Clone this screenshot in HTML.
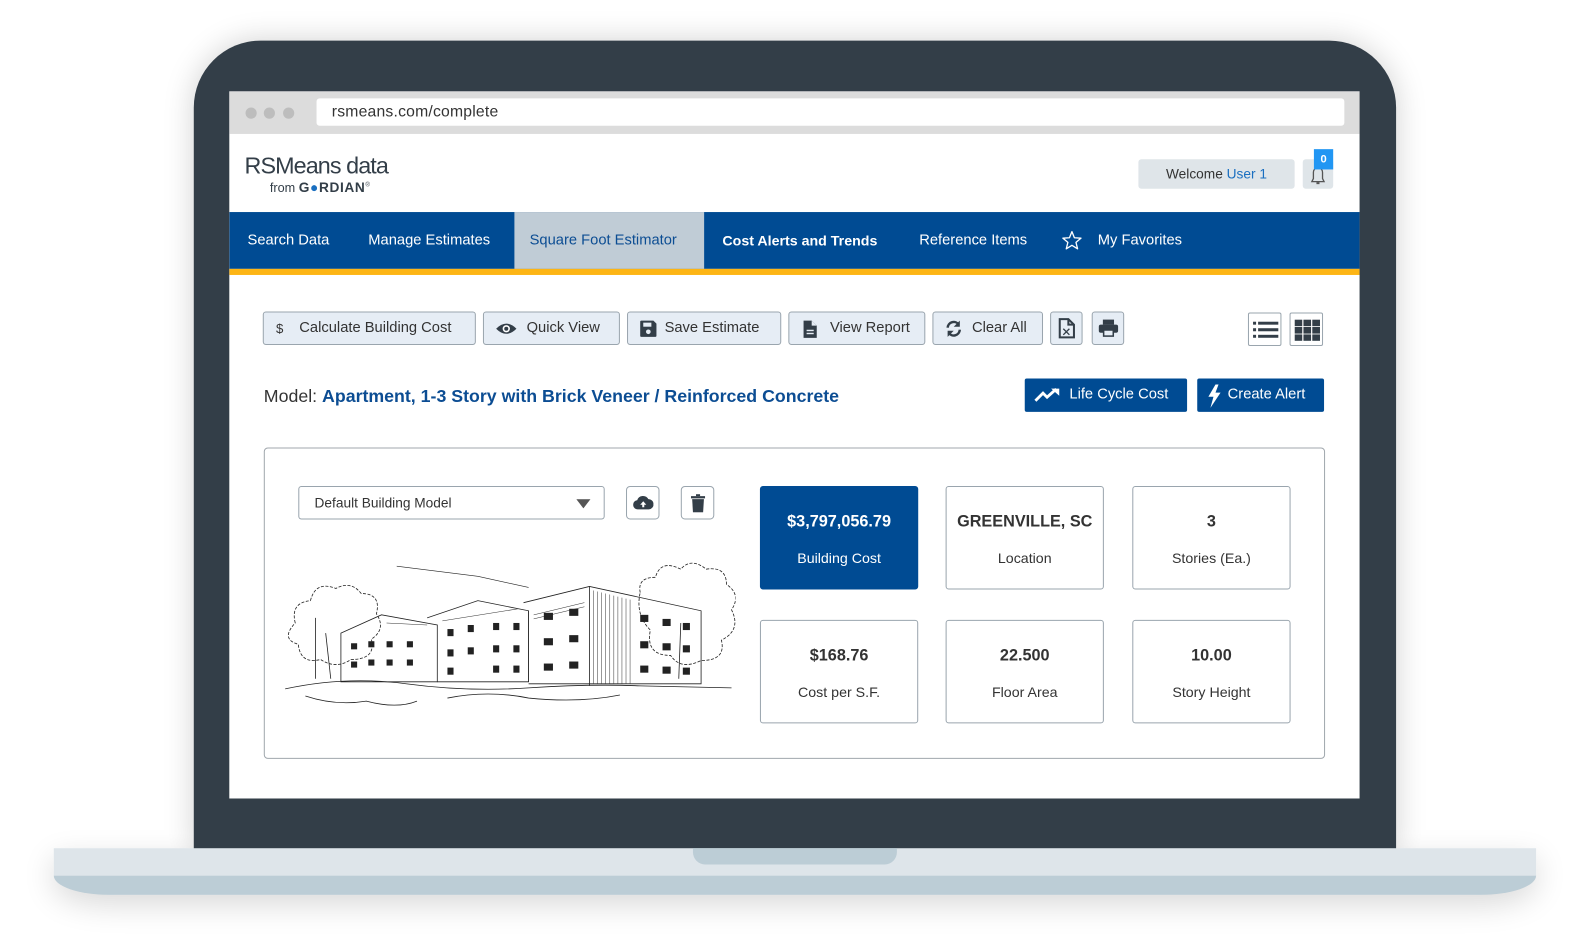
<!DOCTYPE html>
<html><head><meta charset="utf-8">
<style>
*{box-sizing:border-box;margin:0;padding:0}
html,body{width:1590px;height:934px;overflow:hidden;background:#fff;font-family:"Liberation Sans",Arial,sans-serif}
#w{position:absolute;left:0;top:0;width:1567px;height:921px;transform:scale(1.0146);transform-origin:0 0}
.a{position:absolute}
.lid{left:191px;top:40px;width:1185px;height:800px;background:#333e48;border-radius:66px 66px 0 0;box-shadow:0 0 30px rgba(0,0,0,.18)}
.screen{left:226px;top:90px;width:1114px;height:697px;background:#fff;overflow:hidden}
.bar{left:0;top:0;width:1114px;height:42px;background:#dcdcdc}
.dot{width:11px;height:11px;border-radius:50%;background:#bdbdbd;top:16px}
.url{left:86px;top:7px;width:1013px;height:27px;background:#fff;border-radius:3px;font-size:15.5px;color:#333;line-height:27px;padding-left:15px;letter-spacing:.2px}
.nav{left:0;top:119px;width:1114px;height:56px;background:#004b93;color:#fff;font-size:14.5px}
.nav span{position:absolute;top:0;line-height:56px}
.yb{left:0;top:175px;width:1114px;height:6px;background:#fdb515}
.btn{position:absolute;top:217px;height:33px;background:#e6edf5;border:1px solid #9aa5ae;border-radius:3px;font-size:14.5px;color:#333;line-height:31px;white-space:nowrap}
.btn svg{position:absolute;top:7px}
.tg{position:absolute;top:218px;width:33px;height:33px;background:#fff;border:1px solid #9aa5ae;border-radius:2px}
.bb{position:absolute;top:283px;height:33px;background:#004b93;border-radius:2px;color:#fff;font-size:14.5px;line-height:33px}
.panel{left:34px;top:351px;width:1046px;height:307px;border:1px solid #a0a7ad;border-radius:4px}
.card{position:absolute;width:156px;height:102px;border:1px solid #9aa5ae;border-radius:3px;text-align:center;color:#333}
.card b{position:absolute;left:0;right:0;top:26px;font-size:16px}
.card i{position:absolute;left:0;right:0;top:62px;font-size:14px;font-style:normal}
.ib{position:absolute;top:37px;width:33px;height:33px;border:1px solid #9aa5ae;border-radius:4px;background:#fff}
</style></head><body><div id="w">
<div class="a" style="left:53px;top:836px;width:1461px;height:46px;border-radius:0 0 60px 60px/0 0 20px 20px;box-shadow:0 10px 30px rgba(0,0,0,.15)"></div>
<div class="a lid"></div>
<div class="a screen">
 <div class="a bar">
  <div class="a dot" style="left:16px"></div><div class="a dot" style="left:34px"></div><div class="a dot" style="left:53px"></div>
  <div class="a url">rsmeans.com/complete</div>
 </div>
 <div class="a" style="left:15px;top:59px;font-size:23px;color:#333e48;letter-spacing:-.9px;line-height:28px">RSMeans data</div>
 <div class="a" style="left:40px;top:86px;font-size:12.5px;color:#333e48;line-height:15px">from <b style="font-size:13.5px;letter-spacing:.6px">G<span style="color:#1a6fc0">●</span>RDIAN</b><sup style="font-size:6px">®</sup></div>
 <div class="a" style="left:896px;top:67px;width:154px;height:29px;background:#dfe5e9;border-radius:3px;font-size:13.5px;line-height:29px;text-align:center;color:#333">Welcome <span style="color:#1a6fc0">User 1</span></div>
 <div class="a" style="left:1058px;top:67px;width:30px;height:29px;background:#dfe5e9;border-radius:3px">
  <svg width="30" height="29" viewBox="0 0 30 29"><path d="M9 22 L21 22 L19.5 19 L19.5 13 A4.5 5 0 0 0 10.5 13 L10.5 19 Z" fill="none" stroke="#555" stroke-width="1.3"/><rect x="13.5" y="22.5" width="3" height="2" fill="#555"/></svg>
 </div>
 <div class="a" style="left:1069px;top:57px;width:19px;height:20px;background:#2196f3;color:#fff;font-size:11px;font-weight:bold;text-align:center;line-height:20px">0</div>
 <div class="a nav">
  <span style="left:18px">Search Data</span>
  <span style="left:137px">Manage Estimates</span>
  <span style="left:281px;width:187px;height:56px;background:#c0ccd6;color:#0c4d93;padding-left:15px">Square Foot Estimator</span>
  <span style="left:486px;font-weight:bold;font-size:14px">Cost Alerts and Trends</span>
  <span style="left:680px">Reference Items</span>
  <svg style="position:absolute;left:820px;top:18px" width="21" height="20" viewBox="0 0 24 23"><path d="M12 1.5 L14.8 8.4 L22.3 8.9 L16.6 13.7 L18.4 21 L12 17 L5.6 21 L7.4 13.7 L1.7 8.9 L9.2 8.4 Z" fill="none" stroke="#fff" stroke-width="1.5" stroke-linejoin="round"/></svg>
  <span style="left:856px">My Favorites</span>
 </div>
 <div class="a yb"></div>

 <div class="btn" style="left:33px;width:210px;padding-left:35px"><span style="position:absolute;left:12px;font-size:13px">$</span>Calculate Building Cost</div>
 <div class="btn" style="left:250px;width:135px;padding-left:42px"><svg style="left:11px;top:9px" width="22" height="14" viewBox="0 0 22 14"><path d="M1 7 Q11 -3 21 7 Q11 17 1 7Z" fill="#333e48"/><circle cx="11" cy="7" r="3.6" fill="#fff"/><circle cx="11" cy="7" r="2" fill="#333e48"/></svg>Quick View</div>
 <div class="btn" style="left:392px;width:152px;padding-left:36px"><svg style="left:11px" width="18" height="18" viewBox="0 0 18 18"><path d="M1 2 Q1 1 2 1 L14 1 L17 4 L17 16 Q17 17 16 17 L2 17 Q1 17 1 16Z" fill="#333e48"/><rect x="4" y="3" width="8" height="4" fill="#e6edf5"/><circle cx="9" cy="12" r="2.3" fill="#e6edf5"/></svg>Save Estimate</div>
 <div class="btn" style="left:551px;width:135px;padding-left:40px"><svg style="left:13px" width="15" height="19" viewBox="0 0 15 19"><path d="M1 1 L9 1 L14 6 L14 18 L1 18Z" fill="#333e48"/><path d="M9 1 L9 6 L14 6" fill="#e6edf5"/><rect x="4" y="10" width="7" height="1.4" fill="#e6edf5"/><rect x="4" y="13" width="7" height="1.4" fill="#e6edf5"/></svg>View Report</div>
 <div class="btn" style="left:693px;width:109px;padding-left:38px"><svg style="left:11px" width="18" height="18" viewBox="0 0 18 18"><path d="M3 8 A6 6 0 0 1 14 5" fill="none" stroke="#333e48" stroke-width="2.4"/><path d="M15 1 L15 7 L9 7Z" fill="#333e48"/><path d="M15 10 A6 6 0 0 1 4 13" fill="none" stroke="#333e48" stroke-width="2.4"/><path d="M3 17 L3 11 L9 11Z" fill="#333e48"/></svg>Clear All</div>
 <div class="btn" style="left:809px;width:32px"><svg style="left:7px;top:5px" width="17" height="21" viewBox="0 0 17 21"><path d="M1.5 1.5 L10 1.5 L15.5 7 L15.5 19.5 L1.5 19.5Z" fill="none" stroke="#333e48" stroke-width="2"/><path d="M10 1.5 L10 7 L15.5 7" fill="none" stroke="#333e48" stroke-width="2"/><path d="M5 11 L11 17 M11 11 L5 17" stroke="#333e48" stroke-width="1.3"/></svg></div>
 <div class="btn" style="left:850px;width:32px"><svg style="left:5px;top:6px" width="21" height="19" viewBox="0 0 21 19"><rect x="5" y="1" width="11" height="5" fill="#333e48"/><rect x="1" y="6" width="19" height="8" rx="2" fill="#333e48"/><rect x="5" y="11" width="11" height="7" fill="#333e48"/><rect x="6.5" y="12" width="8" height="4.5" fill="#e6edf5"/></svg></div>
 <div class="tg" style="left:1004px"><svg style="position:absolute;left:4px;top:8px" width="25" height="16" viewBox="0 0 25 16"><g fill="#333e48"><rect x="0" y="0" width="3" height="3"/><rect x="5" y="0" width="20" height="3"/><rect x="0" y="6.5" width="3" height="3"/><rect x="5" y="6.5" width="20" height="3"/><rect x="0" y="13" width="3" height="3"/><rect x="5" y="13" width="20" height="3"/></g></svg></div>
 <div class="tg" style="left:1045px"><svg style="position:absolute;left:4px;top:6px" width="25" height="21" viewBox="0 0 25 21"><g fill="#333e48"><rect x="0" y="0" width="7.5" height="6.5"/><rect x="8.7" y="0" width="7.5" height="6.5"/><rect x="17.4" y="0" width="7.6" height="6.5"/><rect x="0" y="7.3" width="7.5" height="6.5"/><rect x="8.7" y="7.3" width="7.5" height="6.5"/><rect x="17.4" y="7.3" width="7.6" height="6.5"/><rect x="0" y="14.6" width="7.5" height="6.4"/><rect x="8.7" y="14.6" width="7.5" height="6.4"/><rect x="17.4" y="14.6" width="7.6" height="6.4"/></g></svg></div>

 <div class="a" style="left:34px;top:289px;font-size:17.5px;color:#333;line-height:22px">Model: <b style="color:#0c4d93">Apartment, 1-3 Story with Brick Veneer / Reinforced Concrete</b></div>
 <div class="bb" style="left:784px;width:160px;padding-left:44px"><svg style="position:absolute;left:9px;top:9px" width="27" height="15" viewBox="0 0 27 15"><path d="M1.5 13 L9 5.5 L13 9.5 L22 1.5" fill="none" stroke="#fff" stroke-width="2.8"/><path d="M17 1 L25 1 L25 8Z" fill="#fff"/></svg>Life Cycle Cost</div>
 <div class="bb" style="left:954px;width:125px;padding-left:30px"><svg style="position:absolute;left:10px;top:6px" width="14" height="23" viewBox="0 0 14 23"><path d="M8 0 L1 12 L6 12 L3 23 L13 8 L8 8 L11 0Z" fill="#fff"/></svg>Create Alert</div>

 <div class="a panel">
  <div class="a" style="left:33px;top:37px;width:302px;height:33px;border:1px solid #9aa5ae;border-radius:3px;font-size:13.5px;color:#333;line-height:31px;padding-left:15px">Default Building Model<svg style="position:absolute;right:13px;top:12px" width="14" height="9" viewBox="0 0 14 9"><path d="M0 0 L14 0 L7 9Z" fill="#555"/></svg></div>
  <div class="ib" style="left:356px"><svg style="position:absolute;left:6px;top:8px" width="20" height="15" viewBox="0 0 20 15"><path d="M5 14 A4.5 4.5 0 0 1 4 5 A6 6 0 0 1 15 4 A5 5 0 0 1 15.5 14Z" fill="#333e48"/><path d="M10 6 L13 9.5 L11 9.5 L11 12 L9 12 L9 9.5 L7 9.5Z" fill="#fff"/></svg></div>
  <div class="ib" style="left:410px"><svg style="position:absolute;left:9px;top:7px" width="14" height="18" viewBox="0 0 14 18"><rect x="0" y="2" width="14" height="2.2" fill="#333e48"/><rect x="5" y="0" width="4" height="2" fill="#333e48"/><path d="M1.2 5 L12.8 5 L12 18 L2 18Z" fill="#333e48"/></svg></div>
  <svg class="a" style="left:20px;top:112px" width="444" height="150" viewBox="0 0 444 150">
   <g fill="none" stroke="#222" stroke-width=".8">
    <path d="M110 4 L190 14 L240 25" stroke-width=".6"/>
    <path d="M10 60 q-5 -20 15 -22 q5 -20 25 -12 q15 -8 25 5 q20 0 15 20 q10 15 -5 25 q5 20 -20 20 q-15 10 -30 0 q-20 5 -22 -15 q-18 -5 -3 -21z" stroke-dasharray="3 1.5"/>
    <path d="M350 30 q-3 -15 15 -15 q5 -18 25 -8 q10 -12 25 0 q20 -3 20 15 q15 10 5 25 q10 20 -10 30 q5 20 -20 20 q-20 10 -30 -5 q-25 0 -20 -25 q-15 -15 -10 -37z" stroke-dasharray="3 1.5"/>
    <path d="M30 55 l0 60 M40 70 l5 45 M390 60 l-2 55"/>
    <path d="M55 70 L95 52 L150 62 L150 118 L55 118 Z"/>
    <path d="M140 55 L190 38 L240 48 L240 118 L150 118"/>
    <path d="M235 40 L300 24 L410 48 L410 120 L240 120"/>
    <path d="M300 24 L300 122 M240 48 L240 118"/>
    <path d="M0 125 Q60 112 120 120 T240 124 T350 122 L440 124"/>
    <path d="M20 132 q30 10 60 5 q30 8 50 0 M160 134 q40 -8 80 0 q50 5 90 -3"/>
   </g>
   <g fill="none" stroke="#333" stroke-width=".5">
    <path d="M304 28 L304 120 M308 29 L308 120 M312 30 L312 120 M316 31 L316 120 M320 32 L320 120 M324 33 L324 120 M328 34 L328 120 M332 35 L332 120 M336 36 L336 120 M340 37 L340 120"/>
    <path d="M245 52 L295 40 M245 56 L295 44 M155 58 L230 46 M100 60 L140 62"/>
   </g>
   <g fill="#222">
    <rect x="65" y="80" width="6" height="6"/><rect x="82" y="78" width="6" height="6"/><rect x="100" y="78" width="6" height="6"/><rect x="120" y="78" width="6" height="6"/>
    <rect x="65" y="98" width="6" height="6"/><rect x="82" y="96" width="6" height="6"/><rect x="100" y="96" width="6" height="6"/><rect x="120" y="96" width="6" height="6"/>
    <rect x="160" y="66" width="6" height="7"/><rect x="180" y="62" width="6" height="7"/><rect x="205" y="60" width="6" height="7"/><rect x="225" y="60" width="6" height="7"/>
    <rect x="160" y="86" width="6" height="7"/><rect x="180" y="84" width="6" height="7"/><rect x="205" y="82" width="6" height="7"/><rect x="225" y="82" width="6" height="7"/>
    <rect x="160" y="104" width="6" height="7"/><rect x="205" y="102" width="6" height="7"/><rect x="225" y="102" width="6" height="7"/>
    <rect x="255" y="50" width="9" height="7"/><rect x="280" y="46" width="9" height="7"/>
    <rect x="255" y="75" width="9" height="7"/><rect x="280" y="72" width="9" height="7"/>
    <rect x="255" y="100" width="9" height="7"/><rect x="280" y="98" width="9" height="7"/>
    <rect x="350" y="52" width="8" height="7"/><rect x="372" y="56" width="8" height="7"/><rect x="392" y="60" width="7" height="7"/>
    <rect x="350" y="78" width="8" height="7"/><rect x="372" y="80" width="8" height="7"/><rect x="392" y="82" width="7" height="7"/>
    <rect x="350" y="102" width="8" height="7"/><rect x="372" y="103" width="8" height="7"/><rect x="392" y="104" width="7" height="7"/>
   </g>
  </svg>
  <div class="card" style="left:488px;top:37px;background:#004b93;border-color:#004b93;color:#fff"><b>$3,797,056.79</b><i>Building Cost</i></div>
  <div class="card" style="left:671px;top:37px"><b>GREENVILLE, SC</b><i>Location</i></div>
  <div class="card" style="left:855px;top:37px"><b>3</b><i>Stories (Ea.)</i></div>
  <div class="card" style="left:488px;top:169px"><b>$168.76</b><i>Cost per S.F.</i></div>
  <div class="card" style="left:671px;top:169px"><b>22.500</b><i>Floor Area</i></div>
  <div class="card" style="left:855px;top:169px"><b>10.00</b><i>Story Height</i></div>
 </div>
</div>
<div class="a" style="left:53px;top:836px;width:1461px;height:27px;background:#dee5ea"></div>
<div class="a" style="left:53px;top:863px;width:1461px;height:19px;background:#bccdd6;border-radius:0 0 55px 55px/0 0 19px 19px"></div>
<div class="a" style="left:683px;top:836px;width:201px;height:16px;background:#bccdd6;border-radius:0 0 12px 12px"></div>
</div></body></html>
